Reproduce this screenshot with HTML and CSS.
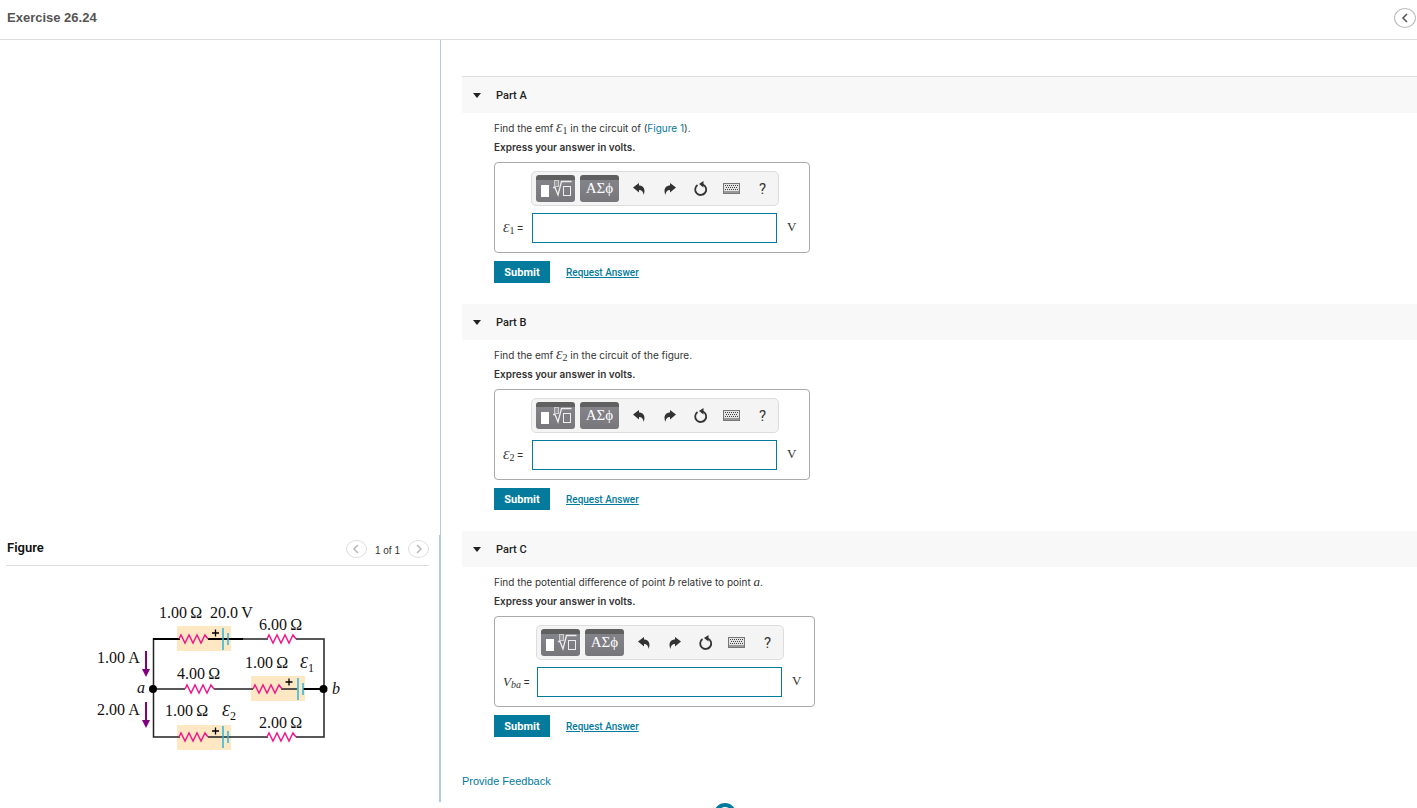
FILE: index.html
```html
<!DOCTYPE html>
<html lang="en">

<head>
    <meta charset="UTF-8">
    <meta name="viewport" content="width=device-width, initial-scale=1.0">
    <title>Exercise 26.24</title>
    <link rel="stylesheet" href="styles.css">
</head>

<body>
    <!-- Shared icons -->
    <svg class="sprite" aria-hidden="true">
        <symbol id="icon-templates" viewBox="0 0 39 27">
            <rect x="5" y="10" width="8" height="12" fill="#fff"/>
            <rect x="18.5" y="5.5" width="4" height="6" fill="#999" stroke="#ccc"/>
            <path d="M17 12.500h2l3 7.500 3.500-13.500h10" fill="none" stroke="#eee" stroke-width="1.3"/>
            <rect x="27.500" y="11.500" width="7" height="9" fill="none" stroke="#eee"/>
        </symbol>
        <symbol id="icon-undo" viewBox="0 0 12 12">
            <path d="M0 4.500L6 0V2.500C10.500 2.500 13 6.500 10.500 12C10.500 9 9 7 6 7V9.500Z"/>
        </symbol>
        <symbol id="icon-redo" viewBox="0 0 12 12">
            <path d="M12 4.500L6 0V2.500C1.500 2.500-1 6.500 1.500 12C1.500 9 3 7 6 7V9.500Z"/>
        </symbol>
        <symbol id="icon-reset" viewBox="0 0 14 16">
            <path d="M3.500 4A5.500 5.500 0 1 0 9 3.500" fill="none" stroke="#333" stroke-width="1.800"/>
            <path d="M5 3L9.500 0V6.500Z"/>
        </symbol>
        <symbol id="icon-keyboard" viewBox="0 0 17 11">
            <rect x=".5" y=".5" width="16" height="10" fill="#e4e4e4" stroke="#777"/>
            <path d="M2 2.500h13M3 4.500h12M2 6.500h13" stroke="#444" stroke-dasharray="1 1"/>
            <path d="M1 9h15" stroke="#999" stroke-width="2"/>
        </symbol>
        <symbol id="icon-left" viewBox="0 0 10 12">
            <path d="M7 2L3 6L7 10" fill="none" stroke="currentColor" stroke-width="1.6"/>
        </symbol>
        <symbol id="icon-right" viewBox="0 0 10 12">
            <path d="M3 2L7 6L3 10" fill="none" stroke="currentColor" stroke-width="1.6"/>
        </symbol>
    </svg>

    <header class="page-header">
        <h1>Exercise 26.24</h1>
        <button class="round-btn" type="button" aria-label="Previous"><svg width="10" height="12"><use href="#icon-left"/></svg></button>
    </header>

    <main class="layout">
        <aside class="sidebar">
            <div class="sidebar-top"></div>
            <section class="figure-panel">
                <div class="figure-header">
                    <h2>Figure</h2>
                    <div class="pager">
                        <button class="round-btn light" type="button" aria-label="Previous figure"><svg width="10" height="12"><use href="#icon-left"/></svg></button>
                        <span>1 of 1</span>
                        <button class="round-btn light" type="button" aria-label="Next figure"><svg width="10" height="12"><use href="#icon-right"/></svg></button>
                    </div>
                </div>
                <svg class="circuit" viewBox="0 0 280 170" width="280" height="170" role="img" aria-label="Circuit diagram">
                    <defs>
                        <path id="resistor" d="M0 0l2-4 4 8 4-8 4 8 4-8 4 8 4-8 3 4" fill="none" stroke="#ec1c8e" stroke-width="1.5"/>
                    </defs>
                    <!-- internal resistance boxes -->
                    <g fill="#fde8c3">
                        <rect x="97" y="36" width="54" height="25"/>
                        <rect x="171" y="86" width="54" height="25"/>
                        <rect x="97" y="135" width="54" height="25"/>
                    </g>
                    <!-- wires -->
                    <g fill="none" stroke="#222" stroke-width="1.5">
                        <path d="M100 49H73.500V147H100M128 147H188M216 147H244V49H216M163 49H188"/>
                        <path d="M73 99H105M134 99H173M201 99H217"/>
                        <path d="M73 49H100M128 49H163M223 99H244" stroke="#000" stroke-width="2"/>
                    </g>
                    <use href="#resistor" x="99" y="49"/>
                    <use href="#resistor" x="187" y="49"/>
                    <use href="#resistor" x="105" y="99"/>
                    <use href="#resistor" x="173" y="99"/>
                    <use href="#resistor" x="99" y="147"/>
                    <use href="#resistor" x="187" y="147"/>
                    <!-- batteries -->
                    <g stroke="#29b5dc" stroke-width="1.5">
                        <path d="M143 38V60M148 43V55M218 88V110M223 93V105M143 136V158M148 141V153"/>
                    </g>
                    <g stroke="#000" stroke-width="1.3">
                        <path d="M132 43h7M135.500 39.500v7M205.500 92h7M209 88.500v7M132 141h7M135.500 137.500v7"/>
                    </g>
                    <circle cx="73" cy="99" r="4"/>
                    <circle cx="243.500" cy="99" r="4"/>
                    <!-- current arrows -->
                    <g fill="#800080">
                        <path d="M65 61h2v18h3l-4 8-4-8h3z"/>
                        <path d="M65 112h2v18h3l-4 8-4-8h3z"/>
                    </g>
                    <g class="circuit-text">
                        <text x="79" y="28">1.00&#8201;Ω</text>
                        <text x="130" y="28">20.0&#8201;V</text>
                        <text x="179" y="40">6.00&#8201;Ω</text>
                        <text x="17" y="73">1.00&#8201;A</text>
                        <text x="97" y="89">4.00&#8201;Ω</text>
                        <text x="165" y="78">1.00&#8201;Ω</text>
                        <text x="220" y="78"><tspan class="emf">Ɛ</tspan><tspan class="sub" dy="4">1</tspan></text>
                        <text x="57" y="103" font-style="italic">a</text>
                        <text x="252" y="104" font-style="italic">b</text>
                        <text x="17" y="125">2.00&#8201;A</text>
                        <text x="85" y="126">1.00&#8201;Ω</text>
                        <text x="142" y="126"><tspan class="emf">Ɛ</tspan><tspan class="sub" dy="4">2</tspan></text>
                        <text x="179" y="138">2.00&#8201;Ω</text>
                    </g>
                </svg>
            </section>
        </aside>

        <div class="content">
            <section class="part">
                <h2 class="part-title"><span class="caret"></span>Part A</h2>
                <form class="part-body">
                    <p>Find the emf <span class="math"><i>Ɛ</i><sub>1</sub></span> in the circuit of (<a href="#">Figure 1</a>).</p>
                    <p class="hint">Express your answer in volts.</p>
                    <div class="answer-box">
                        <div class="toolbar">
                            <button class="dark-btn" type="button" aria-label="Templates"><svg width="39" height="27"><use href="#icon-templates"/></svg></button>
                            <button class="dark-btn" type="button">ΑΣϕ</button>
                            <button class="tool" type="button" aria-label="Undo"><svg width="12" height="12"><use href="#icon-undo"/></svg></button>
                            <button class="tool" type="button" aria-label="Redo"><svg width="12" height="12"><use href="#icon-redo"/></svg></button>
                            <button class="tool" type="button" aria-label="Reset"><svg width="14" height="16"><use href="#icon-reset"/></svg></button>
                            <button class="tool" type="button" aria-label="Keyboard shortcuts"><svg width="17" height="11"><use href="#icon-keyboard"/></svg></button>
                            <button class="tool" type="button">?</button>
                        </div>
                        <label for="answerA"><span class="math"><i>Ɛ</i><sub>1</sub></span> =</label>
                        <input type="text" id="answerA" name="answerA">
                        <span class="unit">V</span>
                    </div>
                    <div class="actions">
                        <button class="submit" type="submit">Submit</button>
                        <a href="#">Request Answer</a>
                    </div>
                </form>
            </section>

            <section class="part">
                <h2 class="part-title"><span class="caret"></span>Part B</h2>
                <form class="part-body">
                    <p>Find the emf <span class="math"><i>Ɛ</i><sub>2</sub></span> in the circuit of the figure.</p>
                    <p class="hint">Express your answer in volts.</p>
                    <div class="answer-box">
                        <div class="toolbar">
                            <button class="dark-btn" type="button" aria-label="Templates"><svg width="39" height="27"><use href="#icon-templates"/></svg></button>
                            <button class="dark-btn" type="button">ΑΣϕ</button>
                            <button class="tool" type="button" aria-label="Undo"><svg width="12" height="12"><use href="#icon-undo"/></svg></button>
                            <button class="tool" type="button" aria-label="Redo"><svg width="12" height="12"><use href="#icon-redo"/></svg></button>
                            <button class="tool" type="button" aria-label="Reset"><svg width="14" height="16"><use href="#icon-reset"/></svg></button>
                            <button class="tool" type="button" aria-label="Keyboard shortcuts"><svg width="17" height="11"><use href="#icon-keyboard"/></svg></button>
                            <button class="tool" type="button">?</button>
                        </div>
                        <label for="answerB"><span class="math"><i>Ɛ</i><sub>2</sub></span> =</label>
                        <input type="text" id="answerB" name="answerB">
                        <span class="unit">V</span>
                    </div>
                    <div class="actions">
                        <button class="submit" type="submit">Submit</button>
                        <a href="#">Request Answer</a>
                    </div>
                </form>
            </section>

            <section class="part">
                <h2 class="part-title"><span class="caret"></span>Part C</h2>
                <form class="part-body">
                    <p>Find the potential difference of point <i class="math">b</i> relative to point <i class="math">a</i>.</p>
                    <p class="hint">Express your answer in volts.</p>
                    <div class="answer-box wide">
                        <div class="toolbar">
                            <button class="dark-btn" type="button" aria-label="Templates"><svg width="39" height="27"><use href="#icon-templates"/></svg></button>
                            <button class="dark-btn" type="button">ΑΣϕ</button>
                            <button class="tool" type="button" aria-label="Undo"><svg width="12" height="12"><use href="#icon-undo"/></svg></button>
                            <button class="tool" type="button" aria-label="Redo"><svg width="12" height="12"><use href="#icon-redo"/></svg></button>
                            <button class="tool" type="button" aria-label="Reset"><svg width="14" height="16"><use href="#icon-reset"/></svg></button>
                            <button class="tool" type="button" aria-label="Keyboard shortcuts"><svg width="17" height="11"><use href="#icon-keyboard"/></svg></button>
                            <button class="tool" type="button">?</button>
                        </div>
                        <label for="answerC"><i class="math">V<sub>ba</sub></i> =</label>
                        <input type="text" id="answerC" name="answerC">
                        <span class="unit">V</span>
                    </div>
                    <div class="actions">
                        <button class="submit" type="submit">Submit</button>
                        <a href="#">Request Answer</a>
                    </div>
                </form>
            </section>

            <a class="feedback" href="#">Provide Feedback</a>
            <div class="brand"><span class="brand-ring"></span></div>
        </div>
    </main>
</body>

</html>
```
FILE: styles.css
```css
* {
    box-sizing: border-box;
}

body {
    display: flex;
    flex-direction: column;
    height: 100vh;
    margin: 0;
    overflow: hidden;
    font-family: "Liberation Sans", Arial, sans-serif;
    font-size: 10px;
    color: #333;
    background: #fff;
}

h1, h2, p {
    margin: 0;
}

a {
    color: #047a9c;
    text-decoration: none;
}

button {
    padding: 0;
    border: none;
    background: none;
    font-family: inherit;
    color: inherit;
    cursor: pointer;
}

.sprite {
    display: none;
}

.page-header {
    display: flex;
    flex: none;
    align-items: center;
    justify-content: space-between;
    height: 40px;
    padding: 0 1px 4px 7px;
    border-bottom: 1px solid #ddd;
}

h1 {
    font-size: 13px;
    font-weight: bold;
    color: #555;
}

.round-btn {
    display: flex;
    align-items: center;
    justify-content: center;
    width: 22px;
    height: 20px;
    border: 1px solid #bbb;
    border-radius: 50%;
    color: #555;
}

.round-btn.light {
    width: 21px;
    height: 18px;
    border-color: #ddd;
    color: #bbb;
}

.layout {
    display: flex;
    flex: 1;
    min-height: 0;
}

/* Left column */
.sidebar {
    display: flex;
    flex: none;
    flex-direction: column;
    width: 441px;
    padding-bottom: 6px;
}

.sidebar-top {
    flex: 1;
    border-right: 1px solid #b5cbdc;
}

.figure-panel {
    padding: 0 10px 42px 6px;
    border-right: 2px solid #b5cbdc;
}

.figure-header {
    display: flex;
    align-items: center;
    justify-content: space-between;
    height: 31px;
    padding-bottom: 3px;
    border-bottom: 1px solid #ddd;
}

.figure-header h2 {
    padding: 0 0 2px 1px;
    font-family: Roboto, sans-serif;
    font-size: 13px;
    font-weight: 600;
    color: #111;
}

.pager {
    display: flex;
    align-items: center;
    gap: 8px;
    font-size: 10px;
}

.pager span {
    padding-top: 3px;
}

.circuit {
    display: block;
    margin: 24px 0 0 74px;
}

.circuit-text {
    font-family: "Liberation Serif", serif;
    font-size: 16px;
    fill: #111;
}

.circuit-text .emf {
    font-style: italic;
}

.circuit-text .sub {
    font-size: 12px;
}

/* Right column */
.content {
    flex: 1;
    padding: 36px 0 0 21px;
    overflow: hidden;
}

.part {
    padding-bottom: 21px;
}

.part-title {
    display: flex;
    align-items: center;
    gap: 15px;
    height: 36px;
    padding-left: 11px;
    background: #f8f8f8;
    font-family: Roboto, sans-serif;
    font-size: 11px;
    font-weight: 500;
    color: #222;
}

.part:first-child .part-title {
    height: 37px;
    border-top: 1px solid #ddd;
}

.caret {
    border: 4px solid transparent;
    border-top: 5px solid #222;
    border-bottom: none;
}

.part-body {
    padding: 6px 0 0 32px;
}

.part-body p {
    height: 19px;
    font-family: Inter, sans-serif;
    line-height: 19px;
}

.part-body .hint {
    font-weight: 600;
}

.math {
    font-family: "Liberation Serif", "DejaVu Serif", serif;
    font-size: 13px;
    line-height: 1;
}

.math sub {
    font-size: 10px;
    line-height: 1;
    vertical-align: -2px;
}

.answer-box {
    display: grid;
    grid-template-columns: 28px 248px 22px;
    row-gap: 7px;
    width: max-content;
    margin-top: 5px;
    padding: 8px 8px 9px;
    border: 1px solid #aaa;
    border-radius: 4px;
}

.answer-box.wide {
    grid-template-columns: 33px 248px 22px;
}

.toolbar {
    display: flex;
    grid-column: 2;
    align-items: center;
    height: 35px;
    padding-left: 4px;
    border: 1px solid #ddd;
    border-radius: 5px;
    background: #f4f4f4;
}

.dark-btn {
    width: 39px;
    height: 27px;
    margin-right: 5px;
    border-radius: 3px;
    background: linear-gradient(#606060 0, #606060 5px, #83838a 5px, #77777b 100%);
    font-family: "Liberation Serif", "DejaVu Serif", serif;
    font-size: 15px;
    color: #fff;
}

.dark-btn svg {
    display: block;
}

.tool {
    display: flex;
    flex: 1;
    align-items: center;
    justify-content: center;
    font-family: Roboto, sans-serif;
    font-size: 15px;
    fill: #333;
}

.answer-box label {
    grid-column: 1;
    align-self: center;
    white-space: nowrap;
}

.answer-box input {
    height: 30px;
    margin: 0 2px 0 1px;
    padding: 0 6px;
    border: 1px solid #047a9c;
    font-size: 13px;
}

.unit {
    align-self: center;
    padding: 0 0 3px 8px;
    font-family: "Liberation Serif", serif;
    font-size: 13px;
}

.actions {
    display: flex;
    align-items: center;
    gap: 16px;
    margin-top: 8px;
}

.actions a {
    font-family: Roboto, sans-serif;
    font-weight: 500;
    text-decoration: underline;
}

.submit {
    width: 56px;
    height: 22px;
    background: #047a9c;
    font-family: Roboto, sans-serif;
    font-size: 11px;
    font-weight: bold;
    color: #fff;
}

.feedback {
    display: block;
    margin-top: 17px;
    font-size: 11px;
}

.brand {
    display: flex;
    justify-content: center;
    width: 526px;
    margin-top: 16px;
}

.brand-ring {
    width: 22px;
    height: 22px;
    border: 4px solid #047a9c;
    border-radius: 50%;
}
```
